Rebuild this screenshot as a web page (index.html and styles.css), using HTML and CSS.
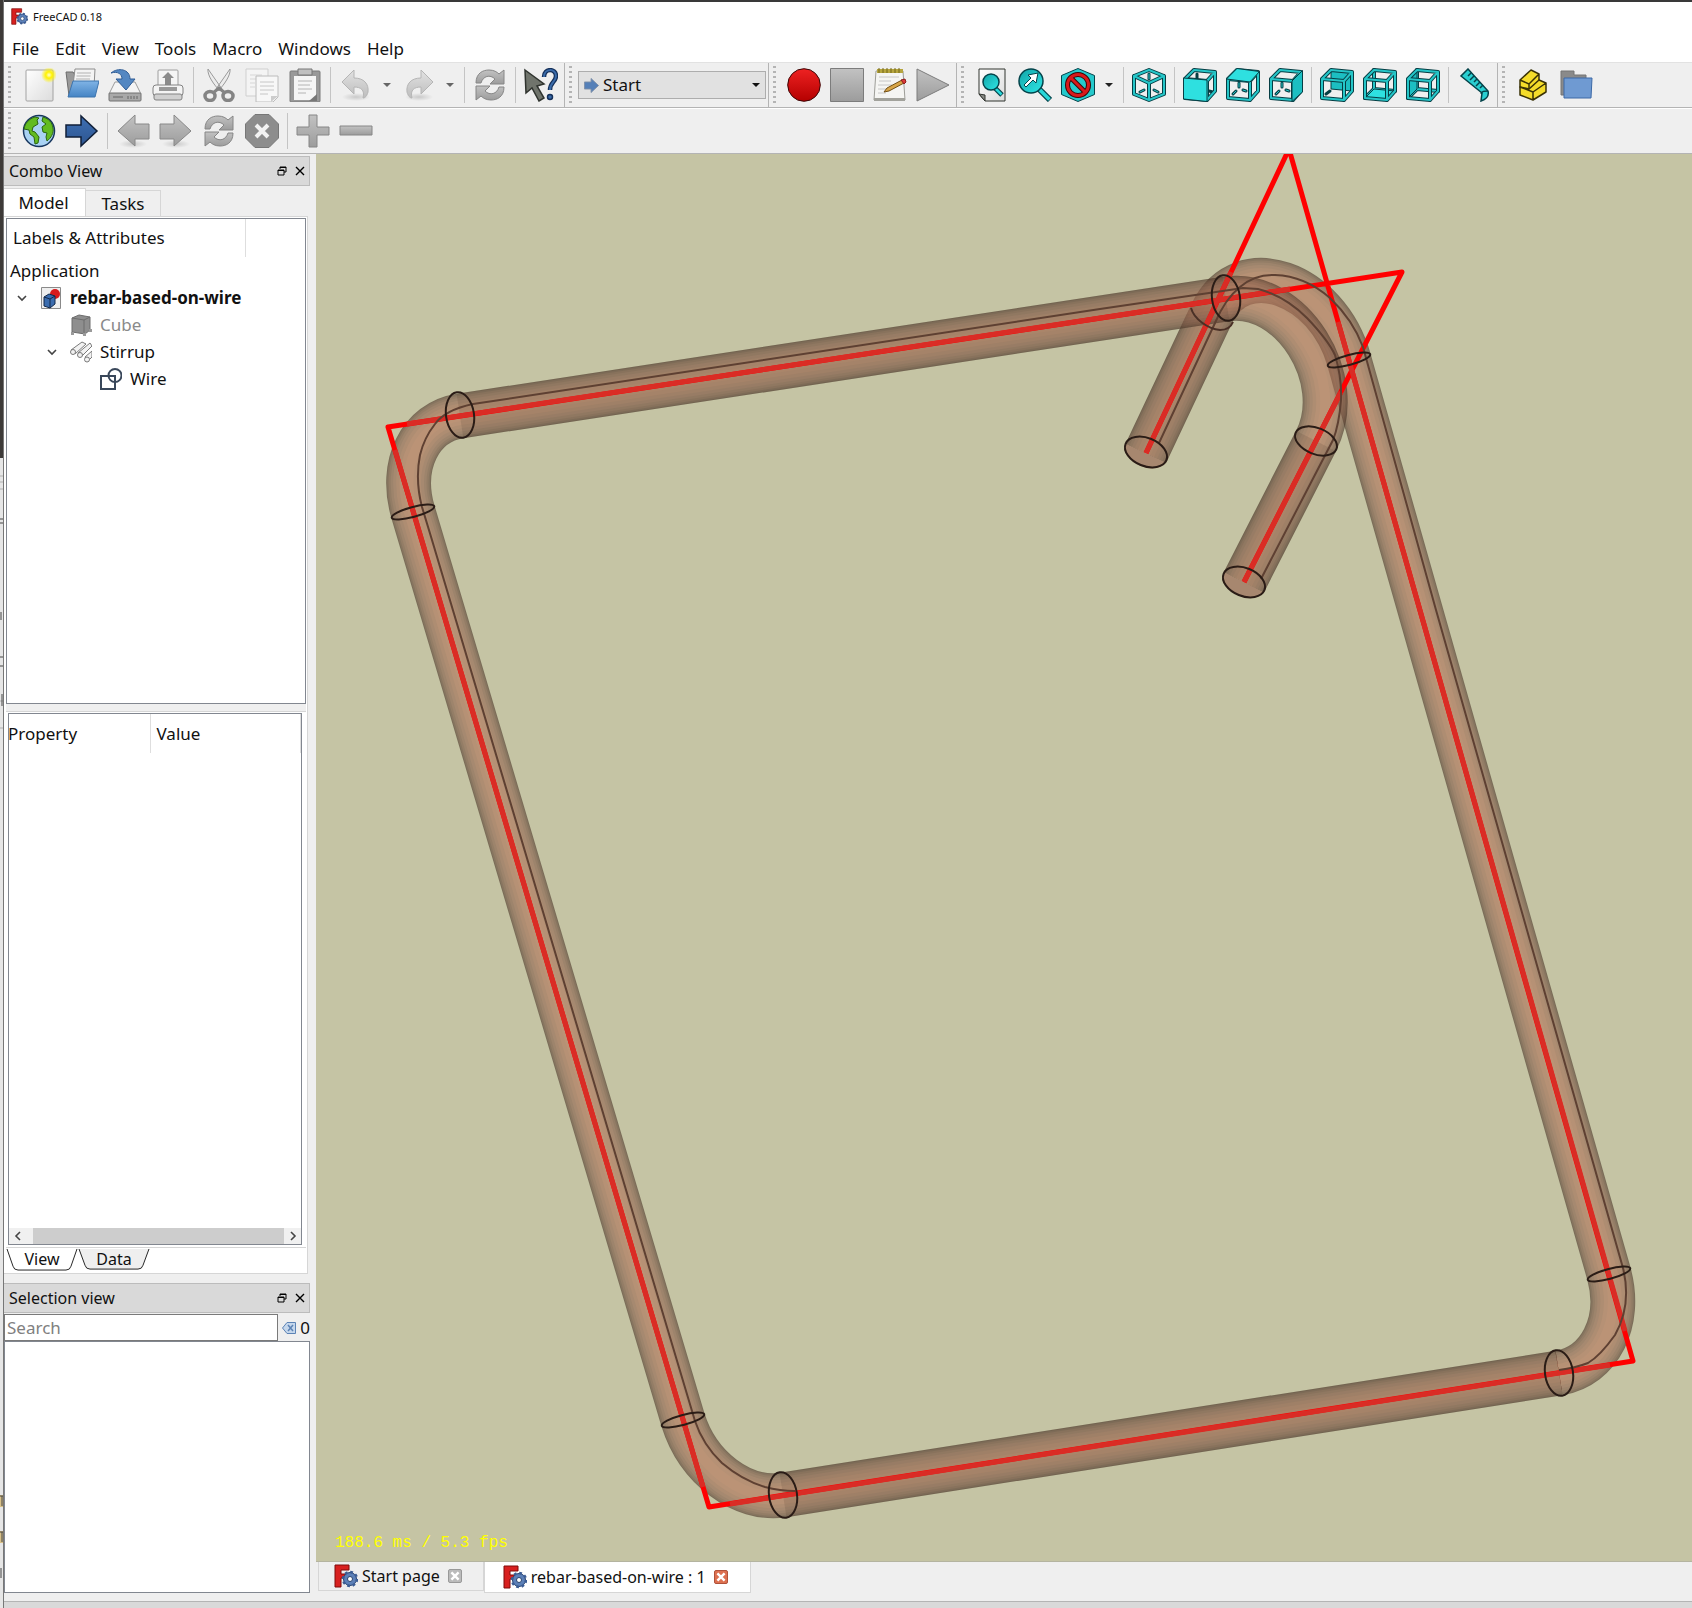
FILE: index.html
```html
<!DOCTYPE html>
<html lang="en">
<head>
    <meta charset="utf-8">
    <title>FreeCAD 0.18</title>
    <link rel="stylesheet" href="styles.css">
</head>
<body>
    <!-- icon set -->
    <svg class="defs" aria-hidden="true">
        <defs>
            <linearGradient id="g-paper" x1="0" y1="0" x2="1" y2="1"><stop offset="0" stop-color="#fff"/><stop offset="1" stop-color="#dcdcdc"/></linearGradient>
            <linearGradient id="g-blue" x1="0" y1="0" x2="0" y2="1"><stop offset="0" stop-color="#80b4e6"/><stop offset="1" stop-color="#4584c4"/></linearGradient>
            <linearGradient id="g-navy" x1="0" y1="0" x2="0" y2="1"><stop offset="0" stop-color="#3f70b4"/><stop offset="1" stop-color="#2c5590"/></linearGradient>
            <linearGradient id="g-gray" x1="0" y1="0" x2="0" y2="1"><stop offset="0" stop-color="#c2c2c2"/><stop offset="1" stop-color="#9c9c9c"/></linearGradient>
            <linearGradient id="g-pale" x1="0" y1="0" x2="0" y2="1"><stop offset="0" stop-color="#e2e2e2"/><stop offset="1" stop-color="#bdbdbd"/></linearGradient>
            <linearGradient id="g-red" x1="0" y1="0" x2="0" y2="1"><stop offset="0" stop-color="#ee2222"/><stop offset="1" stop-color="#b40000"/></linearGradient>
            <linearGradient id="g-cyan" x1="0" y1="0" x2="1" y2="1"><stop offset="0" stop-color="#12a5a8"/><stop offset="1" stop-color="#2fe6e6"/></linearGradient>
            <radialGradient id="g-sun"><stop offset="0" stop-color="#ffffd0"/><stop offset=".4" stop-color="#fff200"/><stop offset="1" stop-color="#fff200" stop-opacity="0"/></radialGradient>
            <radialGradient id="g-shade"><stop offset="0" stop-color="#000" stop-opacity=".16"/><stop offset="1" stop-color="#000" stop-opacity="0"/></radialGradient>
        </defs>
        <symbol id="i-logo" viewBox="0 0 24 24">
            <path d="M1 1h14v5H7v4h6v4H7v9H1z" fill="#d8201f" stroke="#7e0a0a"/>
            <circle cx="16" cy="15" r="6.500" fill="#5c80b8" stroke="#29436f"/>
            <circle cx="16" cy="15" r="7" fill="none" stroke="#3b5c94" stroke-width="2.500" stroke-dasharray="2.750 2.750"/>
            <circle cx="16" cy="15" r="2.500" fill="#fff" stroke="#29436f"/>
        </symbol>
        <symbol id="i-new" viewBox="0 0 34 34">
            <rect x="4" y="2" width="27" height="31" rx="1" fill="url(#g-paper)" stroke="#a2a2a2"/>
            <circle cx="27" cy="7" r="8" fill="url(#g-sun)"/>
        </symbol>
        <symbol id="i-open" viewBox="0 0 34 34">
            <path d="M1 4h7l2 3v21H4z" fill="#9a9a9a" stroke="#6c6c6c"/>
            <path d="M7 25 10 1h20l-1 18z" fill="#f4f4f4" stroke="#8c8c8c"/>
            <path d="M12 5h14M11.500 8h14M11 11h14" stroke="#b2b2b2" fill="none"/>
            <path d="M8 13h26l-4 16H3z" fill="url(#g-blue)" stroke="#3d74ad"/>
        </symbol>
        <symbol id="i-save" viewBox="0 0 34 34">
            <path d="M7 14h20l6 12H1z" fill="#f4f4f4" stroke="#9b9b9b"/>
            <rect x="1" y="25" width="32" height="8" rx="1" fill="#a9a9a9" stroke="#737373"/>
            <path d="M5 29h10M20 28v3M23 28v3M26 28v3M29 28v3" stroke="#676767" fill="none"/>
            <path d="M3 5C10-1 22 1 22 11h5l-9 11-10-11h6c0-5-4-8-11-6z" fill="#5387c2" stroke="#2f5d96"/>
        </symbol>
        <symbol id="i-print" viewBox="0 0 34 34">
            <rect x="7" y="2" width="20" height="17" rx="1" fill="#f5f5f5" stroke="#9e9e9e"/>
            <path d="M17 4l6 6h-3v7h-6v-7h-3z" fill="#8b8b8b"/>
            <rect x="2" y="17" width="30" height="11" rx="3" fill="#f4f4f4" stroke="#828282"/>
            <path d="M8 19h18v4H8z" fill="#999"/>
            <rect x="3" y="26" width="28" height="6" rx="2" fill="#d0d0d0" stroke="#828282"/>
        </symbol>
        <symbol id="i-cut" viewBox="0 0 34 34">
            <path d="M6 1c-1 6 6 16 12 22l2-2zM28 1c1 6-6 16-12 22l-2-2z" fill="#ececec" stroke="#9a9a9a"/>
            <ellipse cx="8" cy="28" rx="5" ry="4.500" fill="none" stroke="#848484" stroke-width="3.500"/>
            <ellipse cx="26" cy="28" rx="5" ry="4.500" fill="none" stroke="#848484" stroke-width="3.500"/>
            <path d="M11 25l6-5 6 5" stroke="#848484" stroke-width="3" fill="none"/>
        </symbol>
        <symbol id="i-copy" viewBox="0 0 34 34">
            <path d="M1 1h22v27H1z" fill="#f4f4f4" stroke="#cfcfcf"/>
            <path d="M5 7h12M5 11h6M5 15h5M5 19h5" stroke="#d6d6d6"/>
            <path d="M11 8h22v21l-5 5H11z" fill="#f7f7f7" stroke="#bcbcbc"/>
            <path d="M15 14h14M15 18h14M15 22h14M15 26h8" stroke="#c6c6c6"/>
            <path d="M33 28h-7v6z" fill="#ccc"/>
        </symbol>
        <symbol id="i-paste" viewBox="0 0 34 34">
            <rect x="2" y="3" width="30" height="31" rx="1" fill="#999" stroke="#7b7b7b"/>
            <path d="M6 8h22v20l-4 4H6z" fill="#f5f5f5"/>
            <path d="M10 1h14v6H10z" fill="#c0c0c0" stroke="#777"/>
            <path d="M10 13h14M10 17h12M10 21h14M10 25h8" stroke="#b4b4b4"/>
            <path d="M29 26v7h-8z" fill="#777"/>
        </symbol>
        <symbol id="i-undo" viewBox="0 0 34 34">
            <ellipse cx="17" cy="29" rx="14" ry="4" fill="url(#g-shade)"/>
            <path d="M15 2v8c10 0 15 6 14 14-1 4-3 6-5 6 2-8-2-11-9-11v7L3 14z" fill="url(#g-pale)" stroke="#b5b5b5"/>
        </symbol>
        <symbol id="i-redo" viewBox="0 0 34 34">
            <ellipse cx="17" cy="29" rx="14" ry="4" fill="url(#g-shade)"/>
            <path d="M19 2v8C9 10 4 16 5 24c1 4 3 6 5 6-2-8 2-11 9-11v7l12-12z" fill="url(#g-pale)" stroke="#b5b5b5"/>
        </symbol>
        <symbol id="i-refresh" viewBox="0 0 34 34">
            <path d="M3 15C3 5 10 2 16 2c5 0 8 2 10 4l5-4v14H17l5-5c-5-5-12-3-14 4z" fill="url(#g-gray)" stroke="#868686"/>
            <path d="M31 19c0 10-7 13-13 13-5 0-8-2-10-4l-5 4V18h14l-5 5c5 5 12 3 14-4z" fill="url(#g-gray)" stroke="#868686"/>
        </symbol>
        <symbol id="i-whats" viewBox="0 0 34 34">
            <path d="M1 2l19 14-7 2 7 12-5 3-7-13-6 5z" fill="#70746c" stroke="#30342f" stroke-width="1.500"/>
            <path d="M20 9c0-9 12-9 12-1 0 6-6 6-6 14" fill="none" stroke="#15305a" stroke-width="4.500"/>
            <path d="M20 9c0-9 12-9 12-1 0 6-6 6-6 14" fill="none" stroke="#3a6cab" stroke-width="2"/>
            <circle cx="26" cy="29" r="2.500" fill="#3a6cab" stroke="#15305a" stroke-width="1.500"/>
        </symbol>
        <symbol id="i-record" viewBox="0 0 34 34"><circle cx="17" cy="17" r="16.300" fill="url(#g-red)" stroke="#3c0606"/></symbol>
        <symbol id="i-stop" viewBox="0 0 34 34"><path d="M.5.500h33v33H.5z" fill="url(#g-gray)" stroke="#7c7c7c"/></symbol>
        <symbol id="i-play" viewBox="0 0 34 34"><path d="M1 1l32 16L1 33z" fill="url(#g-gray)" stroke="#7c7c7c"/></symbol>
        <symbol id="i-macro" viewBox="0 0 34 34">
            <path d="M3 3h27l2 29H1z" fill="#f5f5f3" stroke="#9d9d98"/>
            <path d="M1 30h31v3H1z" fill="#a2a29c"/>
            <path d="M4 1h26v4H4z" fill="#b6a53e"/>
            <path d="M6 0v5M10 0v5M14 0v5M18 0v5M22 0v5M26 0v5" stroke="#736619"/>
            <path d="M6 9h20M6 13h12M5 17h14M5 21h9M5 25h8" stroke="#c6c6c6"/>
            <path d="M11 24l3-4 15-8 2 3-15 8z" fill="#d9a648" stroke="#735015"/>
            <path d="M28 12l4-1 1 3-2 2z" fill="#dd3a3a" stroke="#8a1c1c"/>
        </symbol>
        <symbol id="i-fit" viewBox="0 0 34 34">
            <path d="M4 1h26v32H10l-6-7z" fill="url(#g-paper)" stroke="#30342f"/>
            <path d="M4 26l6 7v-6z" fill="#8a8c88" stroke="#30342f"/>
            <path d="M20 20l7 7" stroke="#04434a" stroke-width="5"/><path d="M20 20l6.500 6.500" stroke="#28d8da" stroke-width="2.500"/>
            <circle cx="16" cy="14" r="8" fill="url(#g-cyan)" stroke="#04434a" stroke-width="1.500"/>
        </symbol>
        <symbol id="i-zoom" viewBox="0 0 34 34">
            <path d="M20 20l12 12" stroke="#04434a" stroke-width="6"/><path d="M21 21l10.500 10.500" stroke="#28d8da" stroke-width="3.500"/>
            <circle cx="13" cy="13" r="12" fill="url(#g-cyan)" stroke="#04434a" stroke-width="1.500"/>
            <path d="M6 17l7-7-3-3 10-2-2 10-3-3-7 7z" fill="#fff" stroke="#04434a"/>
        </symbol>
        <symbol id="i-style" viewBox="0 0 34 34">
            <path d="M17 .5l16.500 7v19L17 33.500.5 26.500v-19z" fill="#25c9cc" stroke="#04434a"/>
            <circle cx="17" cy="17" r="10.500" fill="none" stroke="#3a0606" stroke-width="5"/>
            <path d="M9.500 9.500l15 15" stroke="#3a0606" stroke-width="5"/>
            <circle cx="17" cy="17" r="10.500" fill="none" stroke="#d8191c" stroke-width="3"/>
            <path d="M9.500 9.500l15 15" stroke="#d8191c" stroke-width="3"/>
        </symbol>
        <symbol id="i-iso" viewBox="0 0 34 34">
            <path d="M17 2l15 6v18l-15 6-15-6V8zM2 8l15 7 15-7M17 15v17" class="frame-dark"/>
            <path d="M17 2l15 6v18l-15 6-15-6V8zM2 8l15 7 15-7M17 15v17" class="frame-light"/>
            <path d="M17 6v5M8 24l4-2M22 22l4 2" class="mark-dark"/><path d="M17 6v5M8 24l4-2M22 22l4 2" class="mark-light"/>
        </symbol>
        <symbol id="i-cube" viewBox="0 0 34 34">
            <path d="M2 11l22 2v19L2 30zM2 11l9-9 21 2-8 9M32 4v19l-8 9" class="frame-dark"/>
            <path d="M2 11l22 2v19L2 30zM2 11l9-9 21 2-8 9M32 4v19l-8 9" class="frame-light"/>
        </symbol>
        <symbol id="i-back-edges" viewBox="0 0 34 34">
            <path d="M11 2v19l21 2M11 21L2 30" class="frame-dark"/><path d="M11 2v19l21 2M11 21L2 30" class="frame-light"/>
        </symbol>
        <symbol id="i-marks" viewBox="0 0 34 34">
            <path d="M13 15v4M7 26l3-3M17 22l3 1" class="mark-dark"/><path d="M13 15v4M7 26l3-3M17 22l3 1" class="mark-light"/>
        </symbol>
        <symbol id="i-front" viewBox="0 0 34 34">
            <path d="M14 6v4M26 23l4 1" class="mark-dark"/>
            <use href="#i-cube"/><path d="M.5 10l23.500 2v21.500L.5 31z" class="face"/>
        </symbol>
        <symbol id="i-top" viewBox="0 0 34 34"><use href="#i-marks"/><use href="#i-cube"/><path d="M.5 11L11 .5l22.500 3L24 14z" class="face"/></symbol>
        <symbol id="i-right" viewBox="0 0 34 34"><use href="#i-marks"/><use href="#i-cube"/><path d="M23 13L33.500 2.500v21.500L23 33.500z" class="face deep"/></symbol>
        <symbol id="i-rear" viewBox="0 0 34 34"><path d="M11 2l21 2v19l-21-2z" class="face deep"/><path d="M6 26l4-3" class="mark-dark"/><use href="#i-cube"/></symbol>
        <symbol id="i-bottom" viewBox="0 0 34 34"><use href="#i-back-edges"/><path d="M2 30l9-9 21 2-8 9z" class="face"/><use href="#i-cube"/></symbol>
        <symbol id="i-left" viewBox="0 0 34 34"><use href="#i-back-edges"/><path d="M2 11l9-9v19l-9 9z" class="face deep"/><use href="#i-cube"/></symbol>
        <symbol id="i-measure" viewBox="0 0 34 34">
            <path d="M11 1l20 22c1 4-1 8-7 10l1-8L4 8z" fill="#29cfd1" stroke="#04434a" stroke-width="1.500"/>
            <path d="M24 26c1-3 3-3 7-3M14 5l-3 3M17 8l-4 4M20 11l-3 3M23 14l-4 4M26 17l-3 3" fill="none" stroke="#04434a" stroke-width="1.500"/>
        </symbol>
        <symbol id="i-part" viewBox="0 0 34 34">
            <g fill="#f4dc2a" stroke="#3a3206" stroke-width="1.500" stroke-linejoin="round">
                <path d="M4 12l11-10 8 4-10 10zM4 12l9 4v7l-9-4zM13 16L23 6v7l-10 10z"/>
                <path d="M4 19l13 5 13-9-7-3-10 9zM4 19l13 5v8L4 27zM17 24l13-9v9l-13 8z"/>
            </g>
        </symbol>
        <symbol id="i-group" viewBox="0 0 34 34">
            <path d="M2 3h13v4h12v20H2z" fill="#8a8a8a" stroke="#757575"/>
            <path d="M5 10h28l-1 20H5z" fill="#6f9ad2" stroke="#3c69a6"/>
        </symbol>
        <symbol id="i-globe" viewBox="0 0 34 34">
            <circle cx="17" cy="17" r="15.500" fill="#a9d2f3" stroke="#17365e" stroke-width="1.500"/>
            <path d="M13 3C7 5 3 9 2 15l5 1 1 4 4 3 1 7 3-1 1-6-4-5-3-1 1-4 5-3-1-4 2-2zM21 3l-1 4 4 3-4 3 1 5 4 1-1 4 1 4c4-3 7-8 6-13-1-6-4-9-10-11z" fill="#62bb21" stroke="#2b6410"/>
        </symbol>
        <symbol id="i-go" viewBox="0 0 34 34"><path d="M1 11h15V2l16 15-16 15v-9H1z" fill="url(#g-navy)" stroke="#101f38" stroke-width="1.500"/></symbol>
        <symbol id="i-go-small" viewBox="0 0 34 34"><path d="M1 9h15V1l17 16-17 16v-8H1z" fill="#5580b8" stroke="#7d8ea6" stroke-width="2"/></symbol>
        <symbol id="i-back" viewBox="0 0 34 34"><ellipse cx="17" cy="30" rx="14" ry="4" fill="url(#g-shade)"/><path d="M33 10v15H19v7L2 17 19 1v9z" fill="url(#g-gray)" stroke="#888"/></symbol>
        <symbol id="i-forward" viewBox="0 0 34 34"><ellipse cx="17" cy="30" rx="14" ry="4" fill="url(#g-shade)"/><path d="M1 10v15h14v7l17-15L15 1v9z" fill="url(#g-gray)" stroke="#888"/></symbol>
        <symbol id="i-halt" viewBox="0 0 34 34">
            <path d="M10 .5h14l9.500 9.500v14L24 33.500H10L.5 24V10z" fill="#8d8d8d" stroke="#777"/>
            <path d="M11 11l12 12M23 11L11 23" stroke="#f2f2f2" stroke-width="4"/>
        </symbol>
        <symbol id="i-plus" viewBox="0 0 34 34"><path d="M13 1h8v12h12v8H21v12h-8V21H1v-8h12z" fill="url(#g-gray)" stroke="#868686"/></symbol>
        <symbol id="i-minus" viewBox="0 0 34 34"><path d="M1 12h32v9H1z" fill="url(#g-gray)" stroke="#868686"/></symbol>
        <symbol id="i-float" viewBox="0 0 10 10"><path d="M3 3V1h6v5H7M1 4h6v5H1zM1 4.500h6M3 1.500h6" fill="none" stroke="#000"/></symbol>
        <symbol id="i-close" viewBox="0 0 10 10"><path d="M1 1l8 8M9 1L1 9" fill="none" stroke="#000" stroke-width="1.400"/></symbol>
        <symbol id="i-chevron" viewBox="0 0 10 10"><path d="M1 3l4 4 4-4" fill="none" stroke="#444" stroke-width="1.600"/></symbol>
    </svg>

    <!-- sliver of the desktop behind the window -->
    <div class="desktop" aria-hidden="true">
        <div class="desktop-dark"></div>
        <div class="desktop-light">
            <svg viewBox="0 0 3 1150" preserveAspectRatio="none">
                <path d="M0 18h3M0 24h3M0 31h3M0 243h3M0 270h3" stroke="#b0b0b0"/>
                <path d="M0 61h3M0 65h3M1 154v8M0 199h3M0 208h3M2 236v12" stroke="#444"/>
                <path d="M0 1037h3v12H0zM0 1073h3v12H0z" fill="#d9c188"/>
                <path d="M0 1038h3M2 1038v10M0 1074h3M2 1074v10M1 1110v10" stroke="#444"/>
            </svg>
        </div>
    </div>

    <div class="window">
        <header class="titlebar">
            <svg class="logo-small"><use href="#i-logo"/></svg>
            <span>FreeCAD 0.18</span>
        </header>

        <nav class="menubar">
            <button>File</button>
            <button>Edit</button>
            <button>View</button>
            <button>Tools</button>
            <button>Macro</button>
            <button>Windows</button>
            <button>Help</button>
        </nav>

        <div class="toolbar-row">
            <div class="toolbar">
                <span class="grip"></span>
                <button class="tool" aria-label="New"><svg><use href="#i-new"/></svg></button>
                <button class="tool" aria-label="Open"><svg><use href="#i-open"/></svg></button>
                <button class="tool" aria-label="Save"><svg><use href="#i-save"/></svg></button>
                <button class="tool" aria-label="Print"><svg><use href="#i-print"/></svg></button>
                <span class="sep"></span>
                <button class="tool" aria-label="Cut"><svg><use href="#i-cut"/></svg></button>
                <button class="tool" aria-label="Copy"><svg><use href="#i-copy"/></svg></button>
                <button class="tool" aria-label="Paste"><svg><use href="#i-paste"/></svg></button>
                <span class="sep"></span>
                <button class="tool" aria-label="Undo"><svg><use href="#i-undo"/></svg></button>
                <button class="drop faded" aria-label="Undo list"></button>
                <button class="tool" aria-label="Redo"><svg><use href="#i-redo"/></svg></button>
                <button class="drop faded" aria-label="Redo list"></button>
                <span class="sep"></span>
                <button class="tool" aria-label="Refresh"><svg><use href="#i-refresh"/></svg></button>
                <span class="sep"></span>
                <button class="tool" aria-label="What's this?"><svg><use href="#i-whats"/></svg></button>
            </div>
            <div class="toolbar">
                <span class="grip"></span>
                <div class="workbench">
                    <svg><use href="#i-go-small"/></svg>
                    <select aria-label="Workbench"><option>Start</option></select>
                </div>
            </div>
            <div class="toolbar">
                <span class="grip"></span>
                <button class="tool" aria-label="Record macro"><svg><use href="#i-record"/></svg></button>
                <button class="tool" aria-label="Stop macro"><svg><use href="#i-stop"/></svg></button>
                <button class="tool" aria-label="Macros"><svg><use href="#i-macro"/></svg></button>
                <button class="tool" aria-label="Execute macro"><svg><use href="#i-play"/></svg></button>
            </div>
            <div class="toolbar">
                <span class="grip"></span>
                <button class="tool" aria-label="Fit all"><svg><use href="#i-fit"/></svg></button>
                <button class="tool" aria-label="Fit selection"><svg><use href="#i-zoom"/></svg></button>
                <button class="tool" aria-label="Draw style"><svg><use href="#i-style"/></svg></button>
                <button class="drop" aria-label="Draw styles"></button>
                <span class="sep"></span>
                <button class="tool" aria-label="Isometric"><svg><use href="#i-iso"/></svg></button>
                <span class="sep"></span>
                <button class="tool" aria-label="Front"><svg><use href="#i-front"/></svg></button>
                <button class="tool" aria-label="Top"><svg><use href="#i-top"/></svg></button>
                <button class="tool" aria-label="Right"><svg><use href="#i-right"/></svg></button>
                <span class="sep"></span>
                <button class="tool" aria-label="Rear"><svg><use href="#i-rear"/></svg></button>
                <button class="tool" aria-label="Bottom"><svg><use href="#i-bottom"/></svg></button>
                <button class="tool" aria-label="Left"><svg><use href="#i-left"/></svg></button>
                <span class="sep"></span>
                <button class="tool" aria-label="Measure distance"><svg><use href="#i-measure"/></svg></button>
            </div>
            <div class="toolbar">
                <span class="grip"></span>
                <button class="tool" aria-label="Create part"><svg><use href="#i-part"/></svg></button>
                <button class="tool" aria-label="Create group"><svg><use href="#i-group"/></svg></button>
            </div>
        </div>

        <div class="toolbar-row">
            <div class="toolbar">
                <span class="grip"></span>
                <button class="tool" aria-label="Open website"><svg><use href="#i-globe"/></svg></button>
                <button class="tool" aria-label="Start page"><svg><use href="#i-go"/></svg></button>
                <span class="sep"></span>
                <button class="tool" aria-label="Previous page"><svg><use href="#i-back"/></svg></button>
                <button class="tool" aria-label="Next page"><svg><use href="#i-forward"/></svg></button>
                <button class="tool" aria-label="Reload"><svg><use href="#i-refresh"/></svg></button>
                <button class="tool" aria-label="Stop loading"><svg><use href="#i-halt"/></svg></button>
                <span class="sep"></span>
                <button class="tool" aria-label="Zoom in"><svg><use href="#i-plus"/></svg></button>
                <button class="tool" aria-label="Zoom out"><svg><use href="#i-minus"/></svg></button>
            </div>
        </div>

        <main class="workspace">
            <aside class="sidebar">
                <div class="dock-title">
                    <h2>Combo View</h2>
                    <button aria-label="Float combo view"><svg><use href="#i-float"/></svg></button>
                    <button aria-label="Close combo view"><svg><use href="#i-close"/></svg></button>
                </div>
                <div class="tabs">
                    <button class="tab active">Model</button>
                    <button class="tab">Tasks</button>
                </div>
                <div class="combo-pane">
                    <div class="tree">
                        <div class="tree-header">Labels &amp; Attributes</div>
                        <ul>
                            <li>Application</li>
                            <li class="level-1 document">
                                <svg class="chevron"><use href="#i-chevron"/></svg>
                                <svg class="tree-icon" viewBox="0 0 22 22">
                                    <path d="M1.500.500h19v21h-19z" fill="#eee" stroke="#8a8a8a"/>
                                    <circle cx="15" cy="7" r="5" fill="#d8191c"/>
                                    <path d="M4 10l5-3 6 2v8l-5 4-6-2z" fill="#3b6cae" stroke="#12294b"/>
                                    <path d="M4 10l6 2 5-3M10 12v9" fill="none" stroke="#12294b"/>
                                </svg>
                                <span>rebar-based-on-wire</span>
                            </li>
                            <li class="level-2 hidden-object">
                                <svg class="tree-icon" viewBox="0 0 22 22">
                                    <path d="M2 4l7-3 11 2v13l-5 4-13-2z" fill="#8e8e8e" stroke="#6d6d6d"/>
                                    <path d="M2 4l12 2 6-3M14 6v14" fill="none" stroke="#6d6d6d"/>
                                    <path d="M1 18h3v3H1zM13 19h3v3h-3zM19 15h3v3h-3z" fill="#9a9a9a"/>
                                </svg>
                                <span>Cube</span>
                            </li>
                            <li class="level-2">
                                <svg class="chevron"><use href="#i-chevron"/></svg>
                                <svg class="tree-icon" viewBox="0 0 22 22">
                                    <g fill="#f2f2f2" stroke="#7a7a7a">
                                        <path d="M1 9L12 1l4 2L5 13z"/><circle cx="3" cy="11" r="2.500"/>
                                        <path d="M8 12l12-10 2 3-11 11z"/><circle cx="10" cy="14" r="2.500"/>
                                        <path d="M15 16l7-6v6l-4 4z"/><circle cx="17" cy="18.500" r="2.500"/>
                                    </g>
                                </svg>
                                <span>Stirrup</span>
                            </li>
                            <li class="level-3">
                                <svg class="tree-icon" viewBox="0 0 22 22">
                                    <path d="M1 8h14v13H1z" fill="none" stroke="#39475a" stroke-width="2"/>
                                    <circle cx="15" cy="7.500" r="6.500" fill="none" stroke="#39475a" stroke-width="2"/>
                                </svg>
                                <span>Wire</span>
                            </li>
                        </ul>
                    </div>
                    <div class="property-frame">
                        <div class="properties">
                            <table>
                                <tr><th>Property</th><th>Value</th></tr>
                            </table>
                            <div class="scrollbar">
                                <button aria-label="Scroll left"><svg class="turn-left"><use href="#i-chevron"/></svg></button>
                                <span class="thumb"></span>
                                <button aria-label="Scroll right"><svg class="turn-right"><use href="#i-chevron"/></svg></button>
                            </div>
                        </div>
                    </div>
                    <div class="bottom-tabs">
                        <button class="bottom-tab">
                            <svg viewBox="0 0 72 24" preserveAspectRatio="none"><path d="M1 1l6 18q1 4 5 4h48q4 0 5-4l6-18" fill="#fff" stroke="#222"/></svg>
                            <span>View</span>
                        </button>
                        <button class="bottom-tab">
                            <svg viewBox="0 0 72 24" preserveAspectRatio="none"><path d="M1 1l6 17q1 4 5 4h48q4 0 5-4l6-17" fill="#efefef" stroke="#222"/></svg>
                            <span>Data</span>
                        </button>
                    </div>
                </div>
                <div class="dock-title selection-title">
                    <h2>Selection view</h2>
                    <button aria-label="Float selection view"><svg><use href="#i-float"/></svg></button>
                    <button aria-label="Close selection view"><svg><use href="#i-close"/></svg></button>
                </div>
                <div class="search-row">
                    <input type="text" placeholder="Search" aria-label="Search">
                    <button aria-label="Clear search">
                        <svg viewBox="0 0 14 12"><path d="M5 .5h8.500v11H5L.5 6z" fill="#c5d7ec" stroke="#5c83b5"/><path d="M6 3l5 6M11 3L6 9" stroke="#5c83b5" stroke-width="1.500"/></svg>
                    </button>
                    <span>0</span>
                </div>
                <div class="selection-list"></div>
            </aside>

            <section class="documents">
                <div class="viewport">
                    <svg class="scene" viewBox="316 154 1376 1407" preserveAspectRatio="xMidYMid slice">
                        <defs>
                            <path id="tube-a" d="M1146 453L1212 313C1241 252 1327 282 1349 360L1609 1274C1622 1322 1600 1366 1559 1373"/>
                            <path id="tube-b" d="M1559 1373L783 1495C742 1501 698 1468 683 1420L413 512C399 465 420 422 460 416L1226 299C1291 289 1348 379 1316 441L1244 582"/>
                        </defs>
                        <!-- rebar, shaded by narrowing strokes -->
                        <g class="rebar">
                            <g class="tube">
                                <ellipse cx="1146" cy="453" rx="22" ry="14" transform="rotate(22 1146 453)" fill="#945f4c"/>
                                <use href="#tube-a" stroke="#4a3427" stroke-width="45"/>
                                <use href="#tube-a" stroke="#5f4233" stroke-width="43"/>
                                <use href="#tube-a" stroke="#734f3e" stroke-width="40"/>
                                <use href="#tube-a" stroke="#835a47" stroke-width="36"/>
                                <use href="#tube-a" stroke="#92634f" stroke-width="31"/>
                                <use href="#tube-a" stroke="#9f6951" stroke-width="25"/>
                                <use href="#tube-a" stroke="#ad7056" stroke-width="18"/>
                                <use href="#tube-a" stroke="#b57459" stroke-width="10"/>
                            </g>
                            <g class="tube">
                                <ellipse cx="1244" cy="582" rx="22" ry="14" transform="rotate(22 1244 582)" fill="#945f4c"/>
                                <use href="#tube-b" stroke="#4a3427" stroke-width="45"/>
                                <use href="#tube-b" stroke="#5f4233" stroke-width="43"/>
                                <use href="#tube-b" stroke="#734f3e" stroke-width="40"/>
                                <use href="#tube-b" stroke="#835a47" stroke-width="36"/>
                                <use href="#tube-b" stroke="#92634f" stroke-width="31"/>
                                <use href="#tube-b" stroke="#9f6951" stroke-width="25"/>
                                <use href="#tube-b" stroke="#ad7056" stroke-width="18"/>
                                <use href="#tube-b" stroke="#b57459" stroke-width="10"/>
                            </g>
                            <path class="shade" d="M460 416L1226 299M1559 1373L783 1495M1146 453L1212 313M1316 441L1244 582"/>
                        </g>
                        <!-- sketch wire -->
                        <path class="wire" d="M1146 453L1289 149 1633 1361 709 1507 388 427 1402 272 1244 582"/>
                        <path class="wire-inside" d="M1146 453L1231 272M1338 322L1625 1331M1610 1365L730 1504M703 1487L395 450M407 424L1290 289M1341 392L1244 582"/>
                        <!-- seam along the rebar -->
                        <path class="seam" d="M1159 443L1215 323Q1225 299 1240 287 1255 274 1275 275 1305 276 1330 298 1353 320 1363 347L1436 610 1623 1268Q1632 1305 1615 1335 1600 1356 1588 1363 1575 1368 1559 1370"/>
                        <path class="seam" d="M795 1491Q780 1491 765 1487 742 1480 722 1463 703 1445 695 1421L432 540 422 507Q415 480 420 455 424 438 435 424 445 410 473 404L1100 309 1243 288 1258 289Q1285 296 1307 318 1328 340 1335 355 1342 378 1341 400 1339 425 1333 440L1261 579"/>
                        <g class="joint">
                            <ellipse cx="1146" cy="452" rx="22" ry="14" transform="rotate(22 1146 452)"/>
                            <ellipse cx="1244" cy="582" rx="22" ry="14" transform="rotate(22 1244 582)"/>
                            <ellipse cx="1316" cy="441" rx="22" ry="13" transform="rotate(22 1316 441)"/>
                            <path d="M1191 308c3 11 17 21 29 22 7 0 11-3 13-8" class="hidden-edge"/>
                            <ellipse cx="1226" cy="298" rx="14" ry="23" transform="rotate(-8 1226 298)"/>
                            <ellipse cx="1349" cy="360" rx="22" ry="5" transform="rotate(-15 1349 360)"/>
                            <ellipse cx="460" cy="415" rx="14" ry="23" transform="rotate(-8 460 415)"/>
                            <ellipse cx="413" cy="512" rx="22" ry="5" transform="rotate(-15 413 512)"/>
                            <ellipse cx="683" cy="1420" rx="22" ry="5" transform="rotate(-15 683 1420)"/>
                            <ellipse cx="783" cy="1495" rx="14" ry="23" transform="rotate(-8 783 1495)"/>
                            <ellipse cx="1609" cy="1274" rx="22" ry="5" transform="rotate(-15 1609 1274)"/>
                            <ellipse cx="1559" cy="1373" rx="14" ry="23" transform="rotate(-8 1559 1373)"/>
                        </g>
                    </svg>
                    <span class="fps">188.6 ms / 5.3 fps</span>
                </div>
                <div class="doc-tabs">
                    <div class="doc-tab">
                        <svg class="logo"><use href="#i-logo"/></svg>
                        <span>Start page</span>
                        <button class="doc-close" aria-label="Close Start page"><svg viewBox="0 0 10 10"><path d="M2 2l6 6M8 2L2 8"/></svg></button>
                    </div>
                    <div class="doc-tab current">
                        <svg class="logo"><use href="#i-logo"/></svg>
                        <span>rebar-based-on-wire : 1</span>
                        <button class="doc-close" aria-label="Close rebar-based-on-wire"><svg viewBox="0 0 10 10"><path d="M2 2l6 6M8 2L2 8"/></svg></button>
                    </div>
                </div>
            </section>
        </main>
        <footer class="statusbar"></footer>
    </div>
</body>
</html>
```
FILE: styles.css
```css
* {
    box-sizing: border-box;
}
body {
    margin: 0;
    height: 100vh;
    display: flex;
    overflow: hidden;
    font-family: "Noto Sans", sans-serif;
    font-size: 17px;
    line-height: 24px;
    color: #111;
    background-color: #efefef;
}
button {
    font: inherit;
    color: inherit;
    background: none;
    border: none;
    padding: 0;
}
.defs {
    position: absolute;
    width: 0;
    height: 0;
}

/* desktop behind the window */
.desktop {
    width: 4px;
    flex: none;
    display: flex;
    flex-direction: column;
    border-right: 1px solid #777;
}
.desktop-dark {
    flex: 458;
    background-color: #3d3a38;
}
.desktop-light {
    flex: 1150;
    min-height: 0;
    background-color: #e6e6e6;
}
.desktop-light svg {
    display: block;
    width: 100%;
    height: 100%;
}

.window {
    flex: 1;
    min-width: 0;
    display: flex;
    flex-direction: column;
    border-top: 2px solid #393939;
}
.titlebar {
    height: 29px;
    display: flex;
    align-items: center;
    gap: 5px;
    padding-left: 7px;
    background-color: #fff;
    font-size: 11px;
}
.logo-small {
    width: 17px;
    height: 17px;
}
.menubar {
    height: 31px;
    display: flex;
    align-items: center;
    gap: 16px;
    padding: 4px 0 0 8px;
    background-color: #fff;
}

/* toolbars */
.toolbar-row {
    height: 46px;
    display: flex;
    border-top: 1px solid #fff;
    border-bottom: 1px solid #b4b4b4;
}
.toolbar-row:nth-of-type(1) {
    border-top-color: #e2e2e2;
}
.toolbar {
    display: flex;
    align-items: center;
    padding-right: 2px;
    border-right: 1px solid #b4b4b4;
}
.toolbar:last-child {
    border-right: none;
}
.grip {
    width: 3px;
    height: 39px;
    margin: 0 6px 0 4px;
    background: repeating-linear-gradient(#b4b4b4 0 2px, transparent 2px 5px);
    flex: none;
}
.tool {
    width: 43px;
    height: 40px;
    display: flex;
    align-items: center;
    justify-content: center;
}
.tool svg {
    width: 34px;
    height: 34px;
}
.sep {
    width: 8px;
    height: 36px;
    background: linear-gradient(#c4c4c4, #c4c4c4) center / 1px 100% no-repeat;
}
.drop {
    width: 20px;
    height: 40px;
    display: flex;
    align-items: center;
    justify-content: center;
}
.drop::after {
    content: "";
    border: 4px solid transparent;
    border-top-color: #222;
    border-bottom: none;
}
.drop.faded::after {
    border-top-color: #666;
}
.workbench {
    display: grid;
    align-items: center;
    width: 188px;
    height: 28px;
    border: 1px solid #adadad;
    background-color: #e1e1e1;
}
.workbench svg {
    grid-area: 1 / 1;
    width: 15px;
    height: 15px;
    margin-left: 5px;
}
.workbench select {
    grid-area: 1 / 1;
    height: 26px;
    padding: 0 0 0 24px;
    border: none;
    appearance: none;
    font: inherit;
    color: #111;
    background: none;
}
.workbench::after {
    content: "";
    grid-area: 1 / 1;
    justify-self: end;
    margin-right: 5px;
    border: 4px solid transparent;
    border-top-color: #111;
    border-bottom: none;
}
.frame-dark, .frame-light, .mark-dark, .mark-light {
    fill: none;
    stroke-linejoin: round;
    stroke-linecap: round;
}
.frame-dark {
    stroke: #063e44;
    stroke-width: 4;
}
.frame-light {
    stroke: #25c6c8;
    stroke-width: 2;
}
.mark-dark {
    stroke: #063e44;
    stroke-width: 3;
}
.mark-light {
    stroke: #25c6c8;
    stroke-width: 1;
}
.face {
    fill: #2ee0e0;
    stroke: #063e44;
}
.face.deep {
    fill: #1cbfc2;
}

/* docks */
.workspace {
    flex: 1;
    min-height: 0;
    display: flex;
}
.sidebar {
    width: 312px;
    flex: none;
    display: flex;
    flex-direction: column;
    padding: 2px 6px 8px 0;
}
.dock-title {
    height: 30px;
    flex: none;
    display: flex;
    align-items: center;
    gap: 8px;
    padding: 0 4px 0 5px;
    border: 1px solid #bcbcbc;
    border-left: none;
    background-color: #d9d9d9;
}
.dock-title h2 {
    flex: 1;
    margin: 0;
    font-size: 16px;
    font-weight: normal;
}
.dock-title button {
    width: 10px;
    height: 24px;
    display: flex;
    align-items: center;
}
.dock-title svg {
    width: 10px;
    height: 10px;
}
.selection-title {
    margin-top: 9px;
}
.tabs {
    height: 30px;
    flex: none;
    display: flex;
    align-items: flex-end;
    padding-top: 2px;
}
.tab {
    width: 75px;
    height: 26px;
    border: 1px solid #d6d6d6;
    border-left: none;
    border-bottom: none;
}
.tab.active {
    width: 82px;
    height: 28px;
    padding-right: 2px;
    background-color: #fff;
}
.combo-pane {
    flex: 1;
    min-height: 0;
    display: flex;
    flex-direction: column;
    margin-right: 2px;
    padding: 1px 1px 2px 2px;
    border: 1px solid #d6d6d6;
    border-left: none;
    background-color: #fff;
}
.tree {
    flex: 488;
    border: 1px solid #828790;
}
.tree-header {
    width: 239px;
    height: 38px;
    padding: 7px 0 0 6px;
    border-right: 1px solid #dedede;
}
.tree ul {
    list-style: none;
    margin: 0;
    padding: 0 0 0 3px;
}
.tree li {
    height: 27px;
    display: flex;
    align-items: center;
}
.tree-icon {
    width: 22px;
    height: 22px;
    flex: none;
    margin-right: 8px;
}
.chevron {
    width: 10px;
    height: 10px;
    margin-right: 13px;
}
.level-1 {
    padding-left: 7px;
    font-weight: bold;
}
.level-2 {
    padding-left: 37px;
}
.level-2.hidden-object {
    padding-left: 60px;
    color: #8a8a8a;
}
.level-3 {
    padding-left: 90px;
}
.property-frame {
    flex: 536;
    display: flex;
    margin: 7px 0 0;
    padding: 1px 4px 2px 2px;
    border-top: 1px solid #d6d6d6;
    border-bottom: 1px solid #d6d6d6;
    box-shadow: 0 -7px 0 #efefef;
}
.properties {
    flex: 1;
    display: flex;
    flex-direction: column;
    justify-content: space-between;
    border: 1px solid #828790;
}
.properties table {
    width: 100%;
    border-collapse: collapse;
}
.properties th {
    height: 39px;
    padding: 0;
    text-align: left;
    text-indent: -1px;
    font-weight: normal;
    border-right: 1px solid #dedede;
}
.properties th:first-child {
    width: 141px;
}
.properties th:last-child {
    padding-left: 7px;
}
.scrollbar {
    height: 16px;
    display: flex;
    align-items: center;
    background-color: #f0f0f0;
}
.scrollbar button {
    width: 17px;
    height: 16px;
    display: flex;
    align-items: center;
    justify-content: center;
}
.scrollbar button:first-child {
    margin-right: 7px;
}
.scrollbar svg {
    width: 10px;
    height: 10px;
}
.turn-left {
    transform: rotate(90deg);
}
.turn-right {
    transform: rotate(-90deg);
}
.thumb {
    flex: 1;
    height: 16px;
    background-color: #cdcdcd;
}
.bottom-tabs {
    height: 23px;
    flex: none;
    display: flex;
}
.bottom-tab {
    width: 72px;
    height: 23px;
    display: grid;
    font-size: 16px;
    line-height: 22px;
}
.bottom-tab svg, .bottom-tab span {
    grid-area: 1 / 1;
    width: 72px;
}
.bottom-tab svg {
    height: 23px;
}
.search-row {
    height: 27px;
    flex: none;
    display: flex;
    align-items: center;
    margin-top: 1px;
    gap: 4px;
}
.search-row input {
    flex: 1;
    min-width: 0;
    height: 27px;
    padding: 0 2px;
    border: 1px solid #7a7a7a;
    font: inherit;
}
.search-row input::placeholder {
    color: #808080;
}
.search-row button {
    display: flex;
}
.search-row svg {
    width: 14px;
    height: 12px;
}
.selection-list {
    height: 252px;
    flex: none;
    border: 1px solid #828790;
    background-color: #fff;
}

/* 3D view */
.documents {
    flex: 1;
    min-width: 0;
    display: flex;
    flex-direction: column;
    padding-bottom: 8px;
}
.viewport {
    flex: 1;
    min-height: 0;
    position: relative;
    background-color: #c5c4a4;
}
.scene {
    position: absolute;
    width: 100%;
    height: 100%;
}
.fps {
    position: absolute;
    left: 19px;
    bottom: 8px;
    font-family: "Liberation Mono", monospace;
    font-size: 16px;
    line-height: 20px;
    color: #ff0;
}
.tube {
    opacity: 0.6;
    fill: none;
}
.shade {
    fill: none;
    stroke: #4a3427;
    stroke-width: 45;
    opacity: 0.15;
}
.wire, .wire-inside {
    fill: none;
    stroke-width: 5;
    stroke: #f00;
    stroke-linejoin: round;
}
.wire-inside {
    stroke: #da2c25;
}
.seam {
    fill: none;
    stroke: #5e4032;
    stroke-width: 2;
}
.joint {
    fill: none;
    stroke: #2a1c16;
    stroke-width: 2;
}
.hidden-edge {
    stroke: #4a3026;
}
.doc-tabs {
    height: 32px;
    flex: none;
    display: flex;
    align-items: flex-start;
    padding-left: 2px;
    border-top: 1px solid #b4b4a0;
    font-size: 16px;
}
.doc-tab {
    height: 29px;
    display: flex;
    align-items: center;
    gap: 4px;
    padding: 0 21px 0 15px;
    border: 1px solid #d6d6d6;
    border-top: none;
}
.doc-tab.current {
    height: 31px;
    padding: 0 22px 0 18px;
    background-color: #fff;
}
.doc-tab .logo {
    width: 24px;
    height: 24px;
}
.doc-close {
    width: 14px;
    height: 14px;
    margin-left: 4px;
    display: flex;
    border: 1px solid #999;
    border-radius: 2px;
    background-color: #bbb;
}
.doc-close path {
    stroke: #fff;
    stroke-width: 2;
}
.current .doc-close {
    border-color: #b0523a;
    background-color: #dd7050;
}
.statusbar {
    height: 7px;
    flex: none;
    border-top: 1px solid #b4b4b4;
    background-color: #d9d9d9;
}
```
